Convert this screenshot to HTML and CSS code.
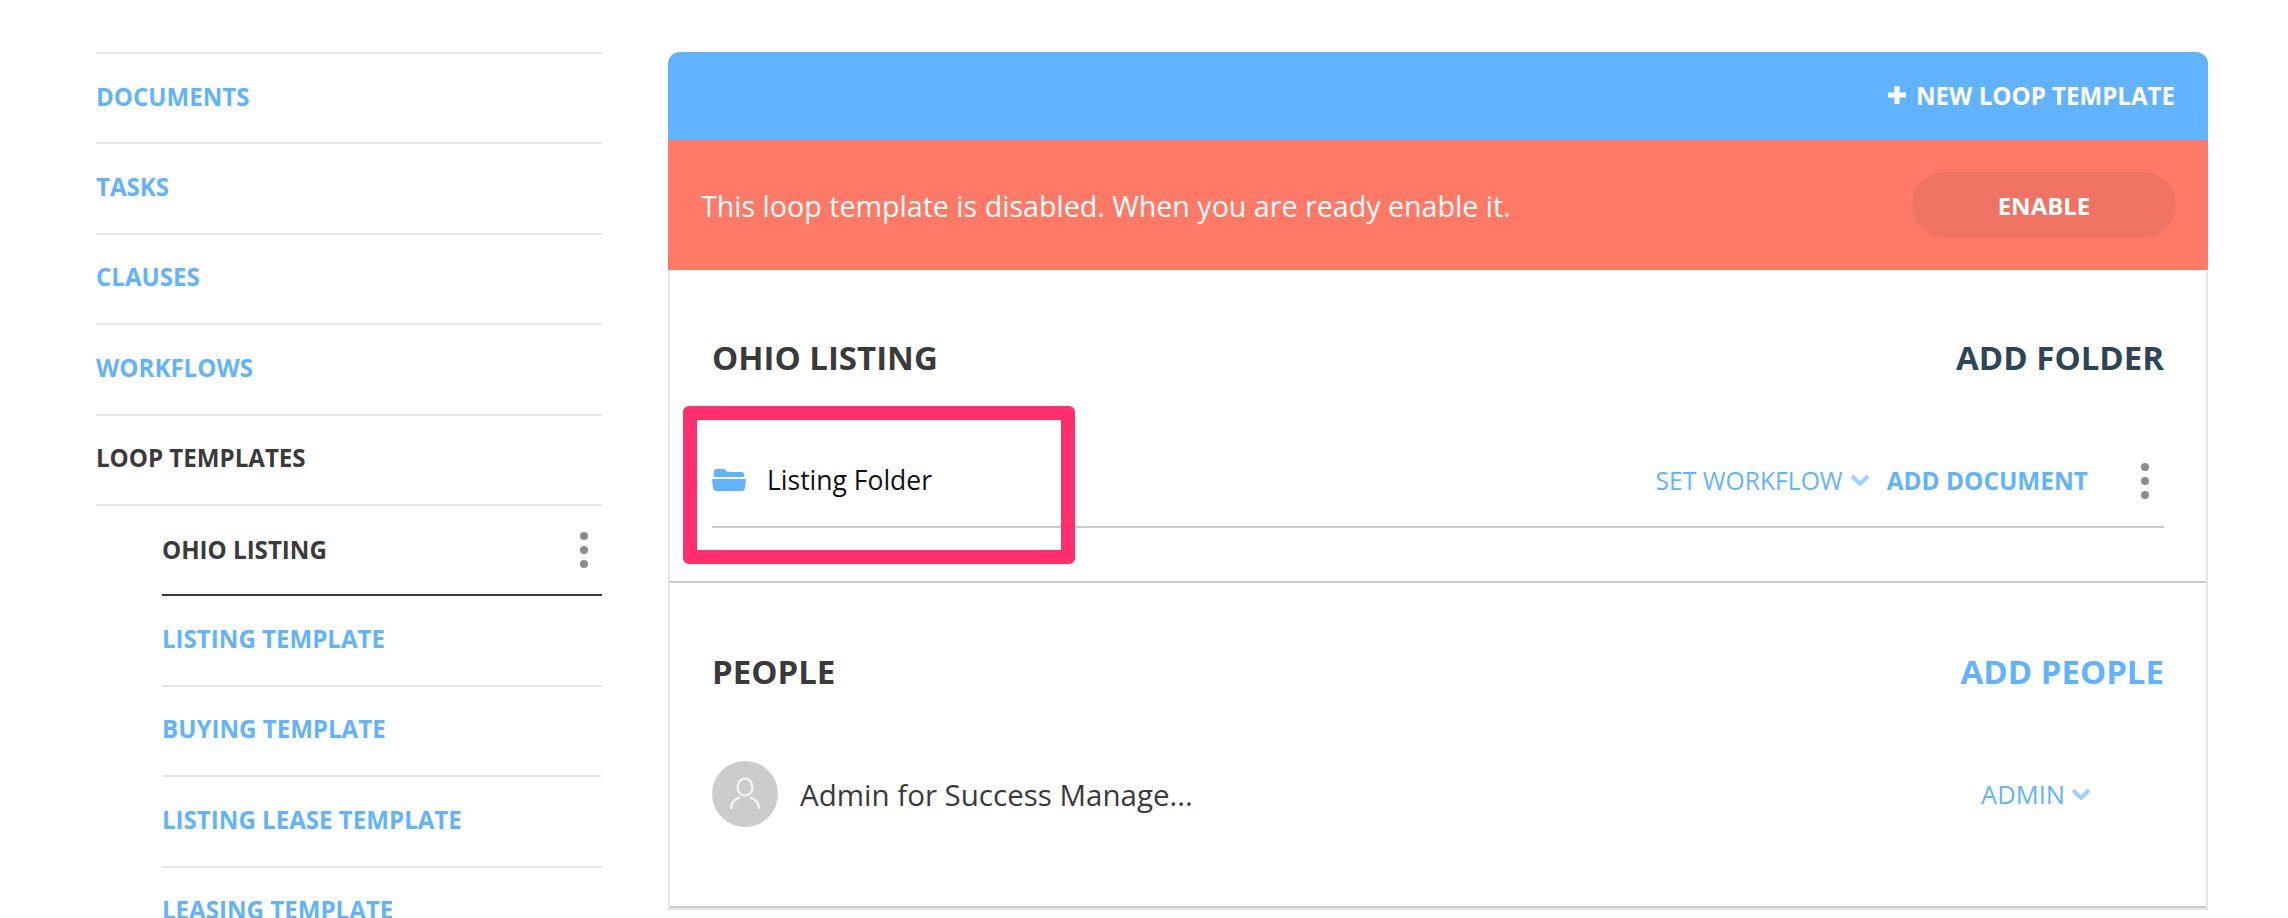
FILE: index.html
```html
<!DOCTYPE html>
<html lang="en">
<head>
  <meta charset="UTF-8">
  <title>Loop Templates</title>
  <link rel="stylesheet" href="styles.css">
</head>
<body>
  <div class="page">
    <!-- Sidebar -->
    <nav class="sidebar">
      <a class="nav-item">DOCUMENTS</a>
      <a class="nav-item">TASKS</a>
      <a class="nav-item">CLAUSES</a>
      <a class="nav-item">WORKFLOWS</a>
      <a class="nav-item nav-current">LOOP TEMPLATES</a>
      <div class="sub-nav">
        <div class="sub-item sub-current">
          <span>OHIO LISTING</span>
          <svg class="dots" viewBox="0 0 10 38"><circle cx="5" cy="5" r="4"/><circle cx="5" cy="19" r="4"/><circle cx="5" cy="33" r="4"/></svg>
        </div>
        <a class="sub-item">LISTING TEMPLATE</a>
        <a class="sub-item">BUYING TEMPLATE</a>
        <a class="sub-item">LISTING LEASE TEMPLATE</a>
        <a class="sub-item">LEASING TEMPLATE</a>
      </div>
    </nav>

    <!-- Main card -->
    <main class="card">
      <div class="card-head">
        <a class="new-link">
          <svg class="plus" viewBox="0 0 18 18"><path d="M9 0v18M0 9h18"/></svg>
          NEW LOOP TEMPLATE
        </a>
      </div>
      <div class="alert">
        <span>This loop template is disabled. When you are ready enable it.</span>
        <button class="enable-btn">ENABLE</button>
      </div>

      <section class="section section-folders">
        <div class="section-head">
          <h2>OHIO LISTING</h2>
          <a class="add-folder">ADD FOLDER</a>
        </div>
        <div class="folder-row">
          <svg class="folder-icon" viewBox="0 0 34 22"><path d="M2 2.5C2 1 3 0 4.500 0h7c1.200 0 2 .6 2.600 1.600L15 3h14.500C31 3 32 4 32 5.500V8H2z"/><path d="M1 10h32c.6 0 1 .5 1 1l-1 8c-.2 1.800-1.200 3-3 3H4c-1.800 0-2.800-1.200-3-3l-1-8c0-.5.400-1 1-1z"/></svg>
          <span class="folder-name">Listing Folder</span>
          <a class="set-workflow">SET WORKFLOW
            <svg class="chev" viewBox="0 0 20 12"><path d="M2 2l8 8 8-8"/></svg>
          </a>
          <a class="add-doc">ADD DOCUMENT</a>
          <svg class="dots" viewBox="0 0 10 38"><circle cx="5" cy="5" r="4"/><circle cx="5" cy="19" r="4"/><circle cx="5" cy="33" r="4"/></svg>
        </div>
      </section>

      <section class="section section-people">
        <div class="section-head">
          <h2>PEOPLE</h2>
          <a class="add-people">ADD PEOPLE</a>
        </div>
        <div class="person-row">
          <span class="avatar">
            <svg viewBox="0 0 30 34"><ellipse cx="15" cy="10" rx="7.500" ry="8.500"/><path d="M1 32c0-6 4-10 9-11.500M29 32c0-6-4-10-9-11.500"/></svg>
          </span>
          <span class="person-name">Admin for Success Manage...</span>
          <a class="role">ADMIN
            <svg class="chev" viewBox="0 0 20 12"><path d="M2 2l8 8 8-8"/></svg>
          </a>
        </div>
      </section>
    </main>
  </div>

  <!-- Annotation drawn over the screenshot -->
  <div class="highlight"></div>
</body>
</html>
```

FILE: styles.css
```css
html, body {
  margin: 0;
  height: 918px;
  overflow: hidden;
  background: #fff;
  font-family: "Open Sans", sans-serif;
  color: #3a3a3a;
}
a {
  color: #62b3ff;
}
.page {
  display: flex;
  align-items: flex-start;
  padding: 52px 80px 0 96px;
  gap: 66px;
}

/* Sidebar */
.sidebar {
  width: 506px;
  flex: none;
}
.nav-item {
  display: flex;
  align-items: center;
  box-sizing: border-box;
  height: 90.4px;
  padding-bottom: 4px;
  border-top: 2px solid #e6e6e6;
  font-size: 24.100px;
  font-weight: 700;
}
.nav-current {
  color: #3a3a3a;
}
.sub-nav {
  border-top: 2px solid #e6e6e6;
  padding-left: 66px;
}
.sub-item {
  display: flex;
  align-items: center;
  justify-content: space-between;
  box-sizing: border-box;
  height: 90.4px;
  padding-bottom: 4px;
  border-bottom: 2px solid #e6e6e6;
  font-size: 24.100px;
  font-weight: 700;
}
.sub-current {
  color: #3a3a3a;
  border-bottom-color: #3a3a3a;
  padding-right: 13px;
  padding-bottom: 2px;
}
.dots {
  width: 10px;
  height: 38px;
  fill: #8c8c8c;
  flex: none;
}

/* Card */
.card {
  flex: 1;
  border: 2px solid #e6e6e6;
  border-top: 0;
  border-radius: 12px 12px 0 0;
}
.card-head {
  display: flex;
  align-items: center;
  justify-content: flex-end;
  height: 88px;
  margin: 0 -2px;
  padding: 0 33px 2px;
  box-sizing: border-box;
  background: #62b3ff;
  border-radius: 12px 12px 0 0;
}
.new-link {
  display: flex;
  align-items: center;
  gap: 10px;
  color: #fff;
  font-size: 24.100px;
  font-weight: 700;
}
.plus {
  width: 18px;
  height: 18px;
  fill: none;
  stroke: #fff;
  stroke-width: 5;
}
.alert {
  display: flex;
  align-items: center;
  justify-content: space-between;
  height: 130px;
  margin: 0 -2px;
  padding: 0 32px 0 33px;
  background: #ff7a66;
  color: #fff;
  font-size: 28.640px;
  font-weight: 400;
}
.enable-btn {
  width: 264px;
  height: 66px;
  border: 0;
  border-radius: 33px;
  background: #ee7362;
  color: #fff;
  font-family: inherit;
  font-size: 24px;
  font-weight: 700;
}

/* Sections */
.section {
  padding: 0 42px;
  border-bottom: 2px solid #ccc;
}
.section-folders {
  height: 313px;
  box-sizing: border-box;
}
.section-people {
  height: 325px;
  box-sizing: border-box;
}
.section-head {
  display: flex;
  align-items: center;
  justify-content: space-between;
  height: 174px;
}
.section-people .section-head {
  height: 176px;
}
h2 {
  margin: 0;
  font-size: 33px;
  font-weight: 700;
}
.add-folder {
  color: #2e4558;
  font-size: 33px;
  font-weight: 700;
}
.add-people {
  font-size: 33px;
  font-weight: 700;
}
.folder-row {
  display: flex;
  align-items: center;
  box-sizing: border-box;
  height: 92px;
  margin-top: -8px;
  padding-bottom: 2px;
  border-bottom: 2px solid #ccc;
}
.folder-icon {
  width: 34px;
  height: 22px;
  fill: #62b3ff;
  margin-right: 21px;
  flex: none;
}
.folder-name {
  flex: 1;
  color: #111;
  font-size: 26.500px;
}
.set-workflow {
  display: flex;
  align-items: center;
  gap: 7px;
  font-size: 24.700px;
}
.add-doc {
  margin: 0 52px 0 17px;
  font-size: 24.400px;
  font-weight: 700;
}
.dots:last-child {
  margin: 2px 14px 0 0;
}
.sub-current .dots:last-child {
  margin: 2px 0 0;
}
.chev {
  width: 20px;
  height: 12px;
  fill: none;
  stroke: #9fd0ff;
  stroke-width: 4;
}
.person-row {
  display: flex;
  align-items: center;
  margin-top: 2px;
}
.avatar {
  display: flex;
  align-items: center;
  justify-content: center;
  width: 66px;
  height: 66px;
  border-radius: 50%;
  background: #ccc;
  margin-right: 22px;
  flex: none;
}
.avatar svg {
  width: 30px;
  height: 34px;
  fill: none;
  stroke: #f2f2f2;
  stroke-width: 2.500;
}
.person-name {
  flex: 1;
  font-size: 29.500px;
}
.role {
  display: flex;
  align-items: center;
  gap: 6px;
  margin-right: 73px;
  font-size: 25.500px;
}

/* Pink annotation */
.highlight {
  position: absolute;
  left: 683px;
  top: 406px;
  width: 392px;
  height: 158px;
  box-sizing: border-box;
  border: 14px solid #ff2e6c;
  border-radius: 6px;
}
```
